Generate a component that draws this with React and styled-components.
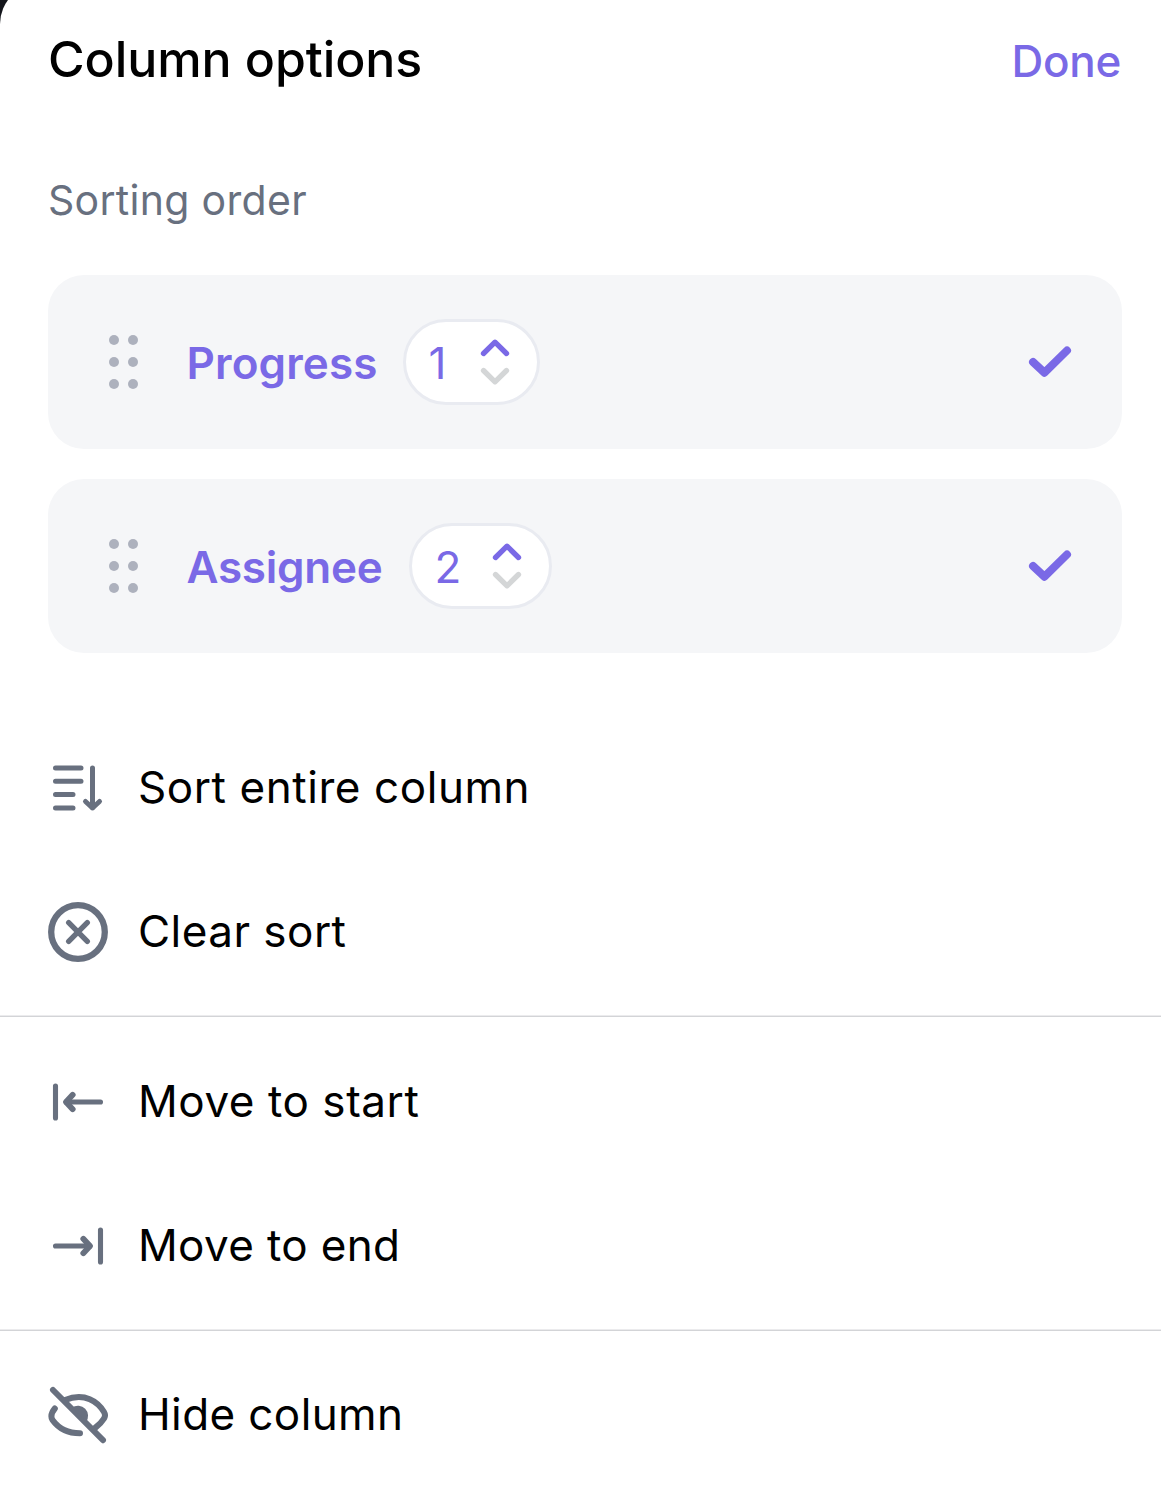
import styled, { createGlobalStyle } from 'styled-components';

const sorting = [
  { name: 'Progress', order: 1, spacing: '0.13px', badge: 137, gap: 25 },
  { name: 'Assignee', order: 2, spacing: '-0.25px', badge: 143, gap: 26 },
];

function DragHandle() {
  return (
    <Handle viewBox="0 0 32 56">
      {[6, 28, 50].map(y => (
        <g key={y}>
          <circle cx="6" cy={y} r="5" />
          <circle cx="25" cy={y} r="5" />
        </g>
      ))}
    </Handle>
  );
}

function Stepper() {
  return (
    <Arrows viewBox="0 0 30 48">
      <path d="M3.5 15.5 15 4.2 26.5 15.5" stroke="#7a69e6" />
      <path d="M3.5 32.5 15 43.8 26.5 32.5" stroke="#d4d6d7" />
    </Arrows>
  );
}

function SortIcon() {
  return (
    <Icon viewBox="0 0 60 60" $stroke={5}>
      <path d="M7.5 10H33M7.5 23.3H33M7.5 36.6H25M7.5 50H25M44.5 10V50M37.5 43.5 44.5 50 51.5 43.5" />
    </Icon>
  );
}

function ClearIcon() {
  return (
    <Icon viewBox="0 0 60 60" $stroke={5.4}>
      <circle cx="30" cy="30" r="26.8" strokeWidth="6.3" />
      <path d="M20.7 20.7 39.3 39.3M39.3 20.7 20.7 39.3" />
    </Icon>
  );
}

function StartIcon() {
  return (
    <Icon viewBox="0 0 60 60" $stroke={5.1}>
      <path d="M7.5 14V46M52.5 30H18" />
      <path d="M24.7 22.8 18 30 24.7 37.2" strokeWidth="5.8" />
      <path d="M18 30 23 26V34Z" fill="#68707f" stroke="none" />
    </Icon>
  );
}

function EndIcon() {
  return (
    <Icon viewBox="0 0 60 60" $stroke={5.1}>
      <path d="M52.5 14V46M7.5 30H42" />
      <path d="M35.3 22.8 42 30 35.3 37.2" strokeWidth="5.8" />
      <path d="M42 30 37 26V34Z" fill="#68707f" stroke="none" />
    </Icon>
  );
}

function HideIcon() {
  return (
    <Icon viewBox="0 0 60 60" $stroke={6}>
      <path d="M5 5 55 55.2" />
      <path d="M17 15C37 7 50 17 56 27Q58 30.5 56 33.5Q53 38.5 47 43" />
      <path d="M6.8 23.5Q1.5 30 4.5 35C11 44 20 48.3 32 48.3" />
      <path d="M24 22.5A10.2 10.2 0 0 1 38 37Z" fill="#68707f" stroke="none" />
    </Icon>
  );
}

function App() {
  return (
    <Backdrop>
      <GlobalStyle />
      <Sheet>
        <Header>
          <Title>Column options</Title>
          <Done>Done</Done>
        </Header>

        <SectionLabel>Sorting order</SectionLabel>
        <Cards>
          {sorting.map(item => (
            <Card key={item.name}>
              <DragHandle />
              <CardName $spacing={item.spacing}>{item.name}</CardName>
              <Badge $width={item.badge} $gap={item.gap}>
                <span>{item.order}</span>
                <Stepper />
              </Badge>
              <Check viewBox="0 0 44 34">
                <path d="M5 17 16.5 27.7 39 5.5" />
              </Check>
            </Card>
          ))}
        </Cards>

        <Menu>
          <MenuItem>
            <SortIcon />
            <Label $spacing="0.57px">Sort entire column</Label>
          </MenuItem>
          <MenuItem>
            <ClearIcon />
            <Label $spacing="0.47px">Clear sort</Label>
          </MenuItem>
        </Menu>
        <Menu $top={13} $edge="inset 0 1px">
          <MenuItem>
            <StartIcon />
            <Label $spacing="0.56px">Move to start</Label>
          </MenuItem>
          <MenuItem>
            <EndIcon />
            <Label $spacing="0.35px">Move to end</Label>
          </MenuItem>
        </Menu>
        <Menu $edge="0 -1px">
          <MenuItem>
            <HideIcon />
            <Label $spacing="0.4px">Hide column</Label>
          </MenuItem>
        </Menu>
      </Sheet>
    </Backdrop>
  );
}

const GlobalStyle = createGlobalStyle`
  body {
    margin: 0;
  }

  * {
    box-sizing: border-box;
  }
`

const Backdrop = styled.div`
  height: 1485px;
  overflow: hidden;
  background: #14161b;
  font-family: Inter, "Liberation Sans", sans-serif;
`

const Sheet = styled.div`
  height: 1520px;
  margin-top: -16px;
  padding-top: 16px;
  border-top-left-radius: 40px;
  background: white;
  color: #000;
`

const Header = styled.div`
  display: flex;
  justify-content: space-between;
  align-items: center;
  height: 118px;
  padding: 0 40px 0 48px;
`

const Title = styled.h1`
  margin: 0;
  font-size: 50px;
  line-height: 60px;
  font-weight: 500;
  letter-spacing: -0.08px;
`

const Done = styled.button`
  padding: 4px 0 0;
  border: none;
  background: none;
  color: #7a69e6;
  font-family: inherit;
  font-size: 44px;
  line-height: 54px;
  font-weight: 500;
  letter-spacing: -0.3px;
`

const SectionLabel = styled.div`
  height: 157px;
  padding: 57px 48px 0;
  color: #68707f;
  font-size: 41px;
  line-height: 50px;
  letter-spacing: 0.3px;
`

const Cards = styled.div`
  display: flex;
  flex-direction: column;
  gap: 30px;
  padding: 0 39px 0 48px;
`

const Card = styled.div`
  display: flex;
  align-items: center;
  height: 174px;
  padding: 0 50px 0 60px;
  border-radius: 36px;
  background: #f5f6f8;
`

const Handle = styled.svg`
  width: 32px;
  height: 56px;
  margin-right: 46.5px;
  fill: #adb1bd;
`

const CardName = styled.div`
  color: #7a69e6;
  font-size: 44px;
  line-height: 54px;
  font-weight: 600;
  letter-spacing: ${props => props.$spacing};
  padding-top: 2px;
`

const Badge = styled.div`
  display: flex;
  align-items: center;
  justify-content: space-between;
  width: ${props => props.$width}px;
  height: 86px;
  margin-left: ${props => props.$gap}px;
  padding: 0 27px 0 23px;
  border: 3px solid #e9ebf1;
  border-radius: 43px;
  background: white;
  color: #7a69e6;
  font-size: 44px;

  span {
    padding-top: 2px;
  }
`

const Arrows = styled.svg`
  width: 30px;
  height: 48px;
  fill: none;
  stroke-width: 5.3;
  stroke-linecap: round;
  stroke-linejoin: round;
`

const Check = styled.svg`
  width: 44px;
  height: 34px;
  margin-left: auto;
  fill: none;
  stroke: #7a69e6;
  stroke-width: 8;
  stroke-linecap: round;
  stroke-linejoin: round;
`

const Menu = styled.div`
  padding: ${props => props.$top || 12}px 0 12px;

  & + & {
    border-top: 1px solid #d3d4d7;
    box-shadow: ${props => props.$edge} #ebebed;
  }

  ${Cards} + & {
    padding-top: 63px;
  }
`

const MenuItem = styled.div`
  display: flex;
  align-items: center;
  gap: 30px;
  height: 144px;
  padding: 0 48px;
`

const Icon = styled.svg`
  flex: none;
  width: 60px;
  height: 60px;
  fill: none;
  stroke: #68707f;
  stroke-width: ${props => props.$stroke};
  stroke-linecap: round;
  stroke-linejoin: round;
`

const Label = styled.div`
  padding-bottom: 2px;
  font-size: 44px;
  line-height: 54px;
  letter-spacing: ${props => props.$spacing};
`

export default App;
